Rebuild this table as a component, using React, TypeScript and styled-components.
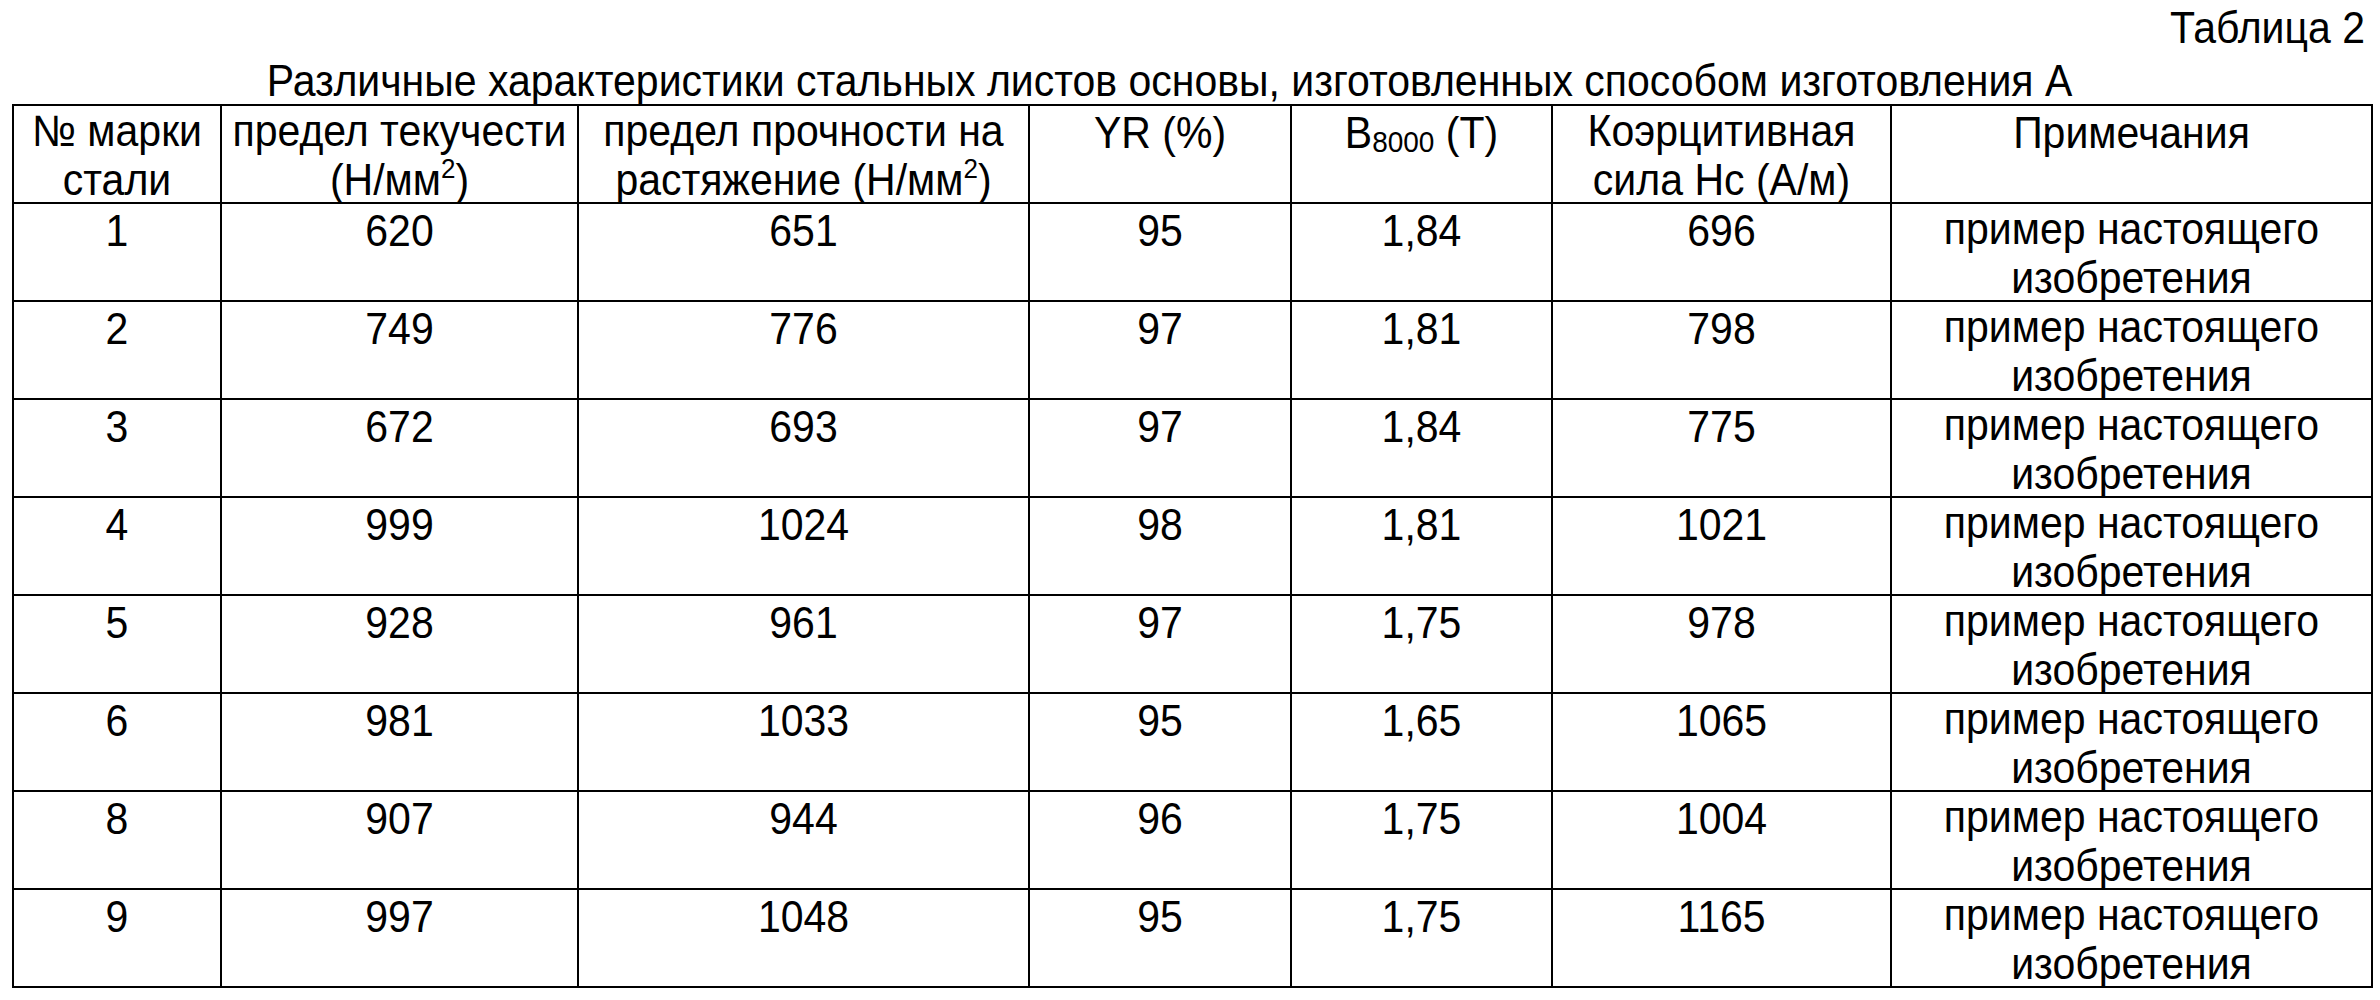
import React from 'react';
import styled, { createGlobalStyle, css } from 'styled-components';

const GlobalStyle = createGlobalStyle`
  html, body {
    margin: 0;
    padding: 0;
    background: #ffffff;
  }
  body {
    font-family: 'Liberation Sans', Arial, sans-serif;
    color: #000000;
  }
`;

const Page = styled.div`
  width: 2359px;
  margin-left: 12px;
  padding-top: 5px;
  font-size: 41px;
`;

// the scan is slightly taller than plain Arial, stretch glyphs a bit
const Txt = styled.span`
  display: inline-block;
  transform: scaleY(1.07);
`;

const Caption = styled.div`
  text-align: right;
  padding-right: 6px;
  line-height: 46px;
`;

const Title = styled.div`
  text-align: center;
  padding-right: 44px;
  margin-top: 8px;
  line-height: 44px;
`;

const Table = styled.table`
  width: 100%;
  margin-top: 1px;
  border-collapse: collapse;
  table-layout: fixed;
  border: 2px solid #000;
`;

const cellCss = css<{ $w?: number }>`
  ${({ $w }) => ($w ? `width: ${$w}px;` : '')}
  box-sizing: border-box;
  border: 2px solid #000;
  padding: 5px 2px 1px;
  text-align: center;
  vertical-align: top;
  line-height: 45px;
  font-weight: normal;
`;

const HeadCell = styled.th<{ $w?: number }>`
  ${cellCss}
`;

const Cell = styled.td`
  ${cellCss}
`;

const Sup = styled.sup`
  font-size: 26px;
  line-height: 0;
  vertical-align: 15px;
`;

const Sub = styled.sub`
  font-size: 28px;
  line-height: 0;
  vertical-align: -4px;
`;

const widths = [208, 357, 451, 262, 261, 339, 481];

const rows = [
  ['1', '620', '651', '95', '1,84', '696'],
  ['2', '749', '776', '97', '1,81', '798'],
  ['3', '672', '693', '97', '1,84', '775'],
  ['4', '999', '1024', '98', '1,81', '1021'],
  ['5', '928', '961', '97', '1,75', '978'],
  ['6', '981', '1033', '95', '1,65', '1065'],
  ['8', '907', '944', '96', '1,75', '1004'],
  ['9', '997', '1048', '95', '1,75', '1165'],
];

const App: React.FC = () => {
  return (
    <Page>
      <GlobalStyle />
      <Caption>
        <Txt>Таблица 2</Txt>
      </Caption>
      <Title>
        <Txt>Различные характеристики стальных листов основы, изготовленных способом изготовления А</Txt>
      </Title>
      <Table>
        <thead>
          <tr>
            <HeadCell $w={widths[0]}>
              <Txt>№ марки<br />стали</Txt>
            </HeadCell>
            <HeadCell $w={widths[1]}>
              <Txt>предел текучести<br />(Н/мм<Sup>2</Sup>)</Txt>
            </HeadCell>
            <HeadCell $w={widths[2]}>
              <Txt>предел прочности на<br />растяжение (Н/мм<Sup>2</Sup>)</Txt>
            </HeadCell>
            <HeadCell $w={widths[3]}>
              <Txt>YR (%)</Txt>
            </HeadCell>
            <HeadCell $w={widths[4]}>
              <Txt>B<Sub>8000</Sub> (T)</Txt>
            </HeadCell>
            <HeadCell $w={widths[5]}>
              <Txt>Коэрцитивная<br />сила Hc (A/м)</Txt>
            </HeadCell>
            <HeadCell $w={widths[6]}>
              <Txt>Примечания</Txt>
            </HeadCell>
          </tr>
        </thead>
        <tbody>
          {rows.map((r) => (
            <tr key={r[0]}>
              {r.map((v, i) => (
                <Cell key={i}>
                  <Txt>{v}</Txt>
                </Cell>
              ))}
              <Cell>
                <Txt>пример настоящего<br />изобретения</Txt>
              </Cell>
            </tr>
          ))}
        </tbody>
      </Table>
    </Page>
  );
};

export default App;
